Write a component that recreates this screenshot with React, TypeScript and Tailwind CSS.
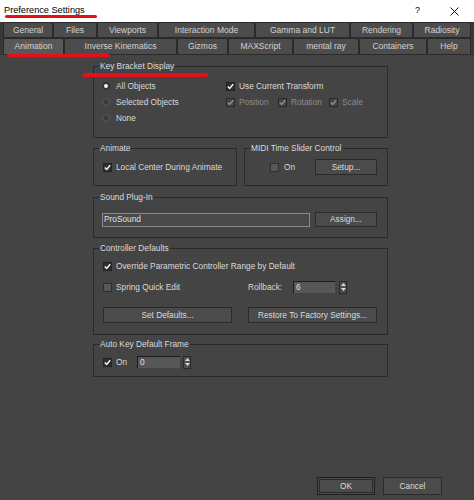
import React from "react";

const FONT = "font-['Liberation_Sans',Arial,sans-serif]";

function Check({ checked, dim, off }: { checked?: boolean; dim?: boolean; off?: boolean }) {
  const cls = dim
    ? "border-[#2a2a2a] bg-[#464646]"
    : off
    ? "border-[#2e2e2e] bg-[#575757]"
    : "border-[#222222] bg-[#303030]";
  return (
    <span className={`w-[9px] h-[9px] border flex items-center justify-center shrink-0 ${cls}`}>
      {checked && (
        <svg width="7" height="7" viewBox="0 0 7 7">
          <path d="M0.8 3.4 L2.7 5.4 L6.2 1.2" stroke={dim ? "#8e8e8e" : "#f2f2f2"} strokeWidth="1.5" fill="none" />
        </svg>
      )}
    </span>
  );
}

function Radio({ on }: { on?: boolean }) {
  return (
    <span
      className={`w-[8px] h-[8px] rounded-full border flex items-center justify-center shrink-0 ${
        on ? "border-[#2f2f2f] bg-[#3c3c3c]" : "border-[#5e5e5e] bg-[#3a3a3a]"
      }`}
    >
      {on && <span className="w-[4px] h-[4px] rounded-full bg-[#f4f4f4]" />}
    </span>
  );
}

function Spin() {
  return (
    <span className="w-[8px] h-[13px] border border-[#2a2a2a] bg-[#4e4e4e] flex flex-col items-center justify-around py-[1px] shrink-0">
      <svg width="5" height="3" viewBox="0 0 5 3"><path d="M0 3 L2.5 0 L5 3 Z" fill="#dcdcdc" /></svg>
      <svg width="5" height="3" viewBox="0 0 5 3"><path d="M0 0 L2.5 3 L5 0 Z" fill="#dcdcdc" /></svg>
    </span>
  );
}

function Btn({ w, h, children, def }: { w: string; h: string; children: React.ReactNode; def?: boolean }) {
  return (
    <div
      className={`${w} ${h} flex items-center justify-center border bg-[#4b4b4b] text-[#dcdcdc] shrink-0 ${
        def ? "border-[#1e1e1e] outline outline-1 outline-[#2a2a2a] -outline-offset-[3px]" : "border-[#2a2a2a]"
      }`}
    >
      {children}
    </div>
  );
}

const row1 = [
  ["General", "w-[50px]"],
  ["Files", "w-[44px]"],
  ["Viewports", "w-[61px]"],
  ["Interaction Mode", "w-[97px]"],
  ["Gamma and LUT", "w-[95px]"],
  ["Rendering", "w-[63px]"],
  ["Radiosity", "w-[58px]"],
];
const row2 = [
  ["Animation", "w-[61px]"],
  ["Inverse Kinematics", "w-[113px]"],
  ["Gizmos", "w-[51px]"],
  ["MAXScript", "w-[65px]"],
  ["mental ray", "w-[66px]"],
  ["Containers", "w-[68px]"],
  ["Help", "w-[44px]"],
];

const LEG = "ml-[5px] px-[1px] leading-[10px]";

export default function App() {
  return (
    <div className={`relative w-[474px] h-[500px] bg-[#444444] flex flex-col overflow-hidden ${FONT} text-[8.3px] text-[#dadada]`}>
      {/* title bar */}
      <div className="h-[22px] bg-white flex items-center pl-[4px] pr-[15px] text-black shrink-0">
        <span className="text-[9.2px]">Preference Settings</span>
        <span className="ml-auto text-[9px] mr-[30px]">?</span>
        <svg width="9" height="9" viewBox="0 0 9 9">
          <path d="M0.5 0.5 L8.5 8.5 M8.5 0.5 L0.5 8.5" stroke="#111" strokeWidth="1" />
        </svg>
      </div>

      {/* tabs */}
      <div className="bg-[#383838] pl-[3px] pr-[3px] shrink-0 text-[8.5px] text-[#d2d2d2]">
        <div className="flex h-[16px]">
          {row1.map(([t, w]) => (
            <div key={t} className={`${w} h-full flex items-center justify-center border border-[#2a2a2a] rounded-t-[2px] bg-[#4c4c4c]`}>
              {t}
            </div>
          ))}
        </div>
        <div className="flex h-[17px]">
          {row2.map(([t, w], i) => (
            <div
              key={t}
              className={`${w} h-full flex items-center justify-center border border-[#2a2a2a] rounded-t-[2px] ${
                i === 0 ? "bg-[#585858]" : "bg-[#4c4c4c]"
              }`}
            >
              {t}
            </div>
          ))}
        </div>
      </div>

      {/* content */}
      <div className="ml-[93px] w-[295px] flex flex-col">
        {/* Key Bracket Display */}
        <fieldset className="mt-[6px] border border-[#2a2a2a] min-w-0 pt-[7px] pb-[11px]">
          <legend className={LEG}>Key Bracket Display</legend>
          <div className="pl-[8px]">
            <div className="flex h-[16px] items-center">
              <div className="w-[124px] flex items-center gap-[6px]">
                <Radio on />
                <span>All Objects</span>
              </div>
              <div className="flex items-center gap-[4px]">
                <Check checked />
                <span>Use Current Transform</span>
              </div>
            </div>
            <div className="flex h-[16px] items-center">
              <div className="w-[124px] flex items-center gap-[6px]">
                <Radio />
                <span>Selected Objects</span>
              </div>
              <div className="w-[52px] flex items-center gap-[4px] text-[#8c8c8c]">
                <Check checked dim />
                <span>Position</span>
              </div>
              <div className="w-[51px] flex items-center gap-[4px] text-[#8c8c8c]">
                <Check checked dim />
                <span>Rotation</span>
              </div>
              <div className="flex items-center gap-[4px] text-[#8c8c8c]">
                <Check checked dim />
                <span>Scale</span>
              </div>
            </div>
            <div className="flex h-[16px] items-center">
              <div className="w-[124px] flex items-center gap-[6px]">
                <Radio />
                <span>None</span>
              </div>
            </div>
          </div>
        </fieldset>

        {/* Animate + MIDI */}
        <div className="mt-[5px] flex gap-[7px]">
          <fieldset className="w-[144px] border border-[#2a2a2a] min-w-0 pt-[6px] pb-[10px]">
            <legend className={LEG}>Animate</legend>
            <div className="pl-[9px] flex h-[16px] items-center gap-[4px]">
              <Check checked />
              <span>Local Center During Animate</span>
            </div>
          </fieldset>
          <fieldset className="w-[144px] border border-[#2a2a2a] min-w-0 pt-[6px] pb-[10px]">
            <legend className={LEG}>MIDI Time Slider Control</legend>
            <div className="pl-[25px] pr-[10px] flex h-[16px] items-center">
              <Check off />
              <span className="ml-[5px]">On</span>
              <div className="ml-auto">
                <Btn w="w-[62px]" h="h-[16px]">Setup...</Btn>
              </div>
            </div>
          </fieldset>
        </div>

        {/* Sound Plug-In */}
        <fieldset className="mt-[6px] border border-[#2a2a2a] min-w-0 pt-[10px] pb-[10px]">
          <legend className={LEG}>Sound Plug-In</legend>
          <div className="pl-[8px] flex h-[15px] items-center gap-[5px]">
            <div className="w-[208px] h-[14px] border border-[#8a8a8a] bg-[#494949] flex items-center px-[1px] text-[#e0e0e0]">
              ProSound
            </div>
            <Btn w="w-[62px]" h="h-[15px]">Assign...</Btn>
          </div>
        </fieldset>

        {/* Controller Defaults */}
        <fieldset className="mt-[5px] border border-[#2a2a2a] min-w-0 pt-[5px] pb-[11px]">
          <legend className={LEG}>Controller Defaults</legend>
          <div className="pl-[9px]">
            <div className="flex h-[16px] items-center gap-[4px]">
              <Check checked />
              <span>Override Parametric Controller Range by Default</span>
            </div>
            <div className="mt-[5px] flex h-[16px] items-center">
              <div className="w-[145px] flex items-center gap-[4px]">
                <Check off />
                <span>Spring Quick Edit</span>
              </div>
              <span className="w-[45px]">Rollback:</span>
              <div className="w-[42px] h-[12px] bg-[#575757] border-t border-l border-[#1c1c1c] flex items-center px-[2px] text-[#e4e4e4]">
                6
              </div>
              <span className="ml-[4px]">
                <Spin />
              </span>
            </div>
            <div className="mt-[12px] flex gap-[16px]">
              <Btn w="w-[129px]" h="h-[16px]">Set Defaults...</Btn>
              <Btn w="w-[129px]" h="h-[16px]">Restore To Factory Settings...</Btn>
            </div>
          </div>
        </fieldset>

        {/* Auto Key Default Frame */}
        <fieldset className="mt-[4px] border border-[#2a2a2a] min-w-0 pt-[6px] pb-[7px]">
          <legend className={LEG}>Auto Key Default Frame</legend>
          <div className="pl-[9px] flex h-[14px] items-center">
            <Check checked />
            <span className="ml-[4px] w-[21px]">On</span>
            <div className="w-[43px] h-[12px] bg-[#575757] border-t border-l border-[#1c1c1c] flex items-center px-[2px] text-[#e4e4e4]">
              0
            </div>
            <span className="ml-[3px]">
              <Spin />
            </span>
          </div>
        </fieldset>
      </div>

      {/* OK / Cancel */}
      <div className="mt-auto flex justify-end gap-[8px] pr-[32px] pb-[5px]">
        <Btn w="w-[58px]" h="h-[18px]" def>OK</Btn>
        <Btn w="w-[59px]" h="h-[18px]">Cancel</Btn>
      </div>

      {/* red annotation strokes */}
      <div className="absolute left-[5px] top-[15px] w-[92px] h-[3px] rounded-full bg-[#e5101a]" />
      <div className="absolute left-[7px] top-[54px] w-[103px] h-[3px] rounded-full bg-[#e5101a]" />
      <div className="absolute left-[82px] top-[73px] w-[126px] h-[4px] rounded-full bg-[#e5101a]" />
    </div>
  );
}
